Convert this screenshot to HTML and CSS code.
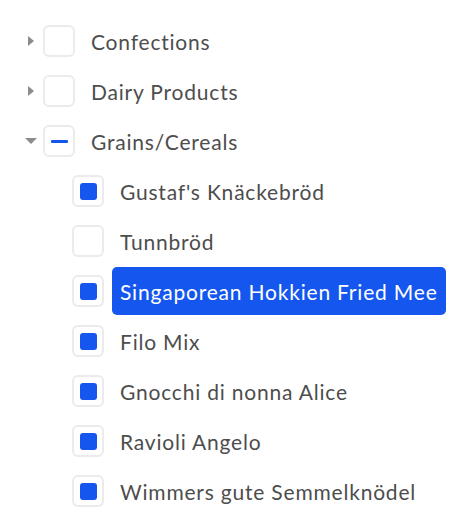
FILE: index.html
```html
<!DOCTYPE html>
<html lang="en">
<head>
    <meta charset="UTF-8">
    <title>Tree view</title>
    <link rel="stylesheet" href="styles.css">
</head>
<body>
    <ul class="tree">
        <li>
            <div class="row"><span class="arrow right"></span><span class="check"></span><span class="label">Confections</span></div>
        </li>
        <li>
            <div class="row"><span class="arrow right"></span><span class="check"></span><span class="label">Dairy Products</span></div>
        </li>
        <li>
            <div class="row"><span class="arrow down"></span><span class="check part"></span><span class="label">Grains/Cereals</span></div>
            <ul class="children">
                <li><div class="row"><span class="check on"></span><span class="label">Gustaf's Knäckebröd</span></div></li>
                <li><div class="row"><span class="check"></span><span class="label">Tunnbröd</span></div></li>
                <li><div class="row"><span class="check on"></span><span class="label selected">Singaporean Hokkien Fried Mee</span></div></li>
                <li><div class="row"><span class="check on"></span><span class="label">Filo Mix</span></div></li>
                <li><div class="row"><span class="check on"></span><span class="label">Gnocchi di nonna Alice</span></div></li>
                <li><div class="row"><span class="check on"></span><span class="label">Ravioli Angelo</span></div></li>
                <li><div class="row"><span class="check on"></span><span class="label">Wimmers gute Semmelknödel</span></div></li>
            </ul>
        </li>
    </ul>
</body>
</html>
```

FILE: styles.css
```css
* { margin: 0; padding: 0; box-sizing: border-box; }

body {
    background: #fff;
    font-family: "Lato", "Noto Sans", sans-serif;
    font-size: 21px;
    letter-spacing: 0.8px;
    color: #4d4d4d;
}

.tree { list-style: none; padding: 16px 0 0 18px; }
.tree ul { list-style: none; }

/* child rows sit under the parent checkbox */
.children { padding-left: 29px; }

.row {
    display: flex;
    align-items: center;
    height: 50px;
}

.arrow {
    width: 25px; height: 32px;
    display: flex; align-items: center; justify-content: center;
}
.arrow::before { content: ""; width: 0; height: 0; border-style: solid; }
.arrow.right::before {
    border-width: 5px 0 5px 6px;
    border-color: transparent transparent transparent #8c8c8c;
}
.arrow.down::before {
    border-width: 6px 6px 0 6px;
    border-color: #8c8c8c transparent transparent transparent;
}
.children .row { padding-left: 25px; }

.check {
    width: 32px; height: 32px;
    border: 2px solid #ebebeb;
    border-radius: 6px;
    background: #fff;
    display: flex; align-items: center; justify-content: center;
    flex-shrink: 0;
}
.check.on::before {
    content: ""; width: 17px; height: 17px;
    background: #1456ee; border-radius: 3px;
}
.check.part::before {
    content: ""; width: 17px; height: 3px;
    background: #1456ee; border-radius: 1px;
}

.label {
    margin-left: 8px;
    padding: 0 8px;
    height: 48px;
    line-height: 49px;
    border-radius: 5px;
    white-space: nowrap;
}
.label.selected { background: #1456ee; color: #fff; }
```
